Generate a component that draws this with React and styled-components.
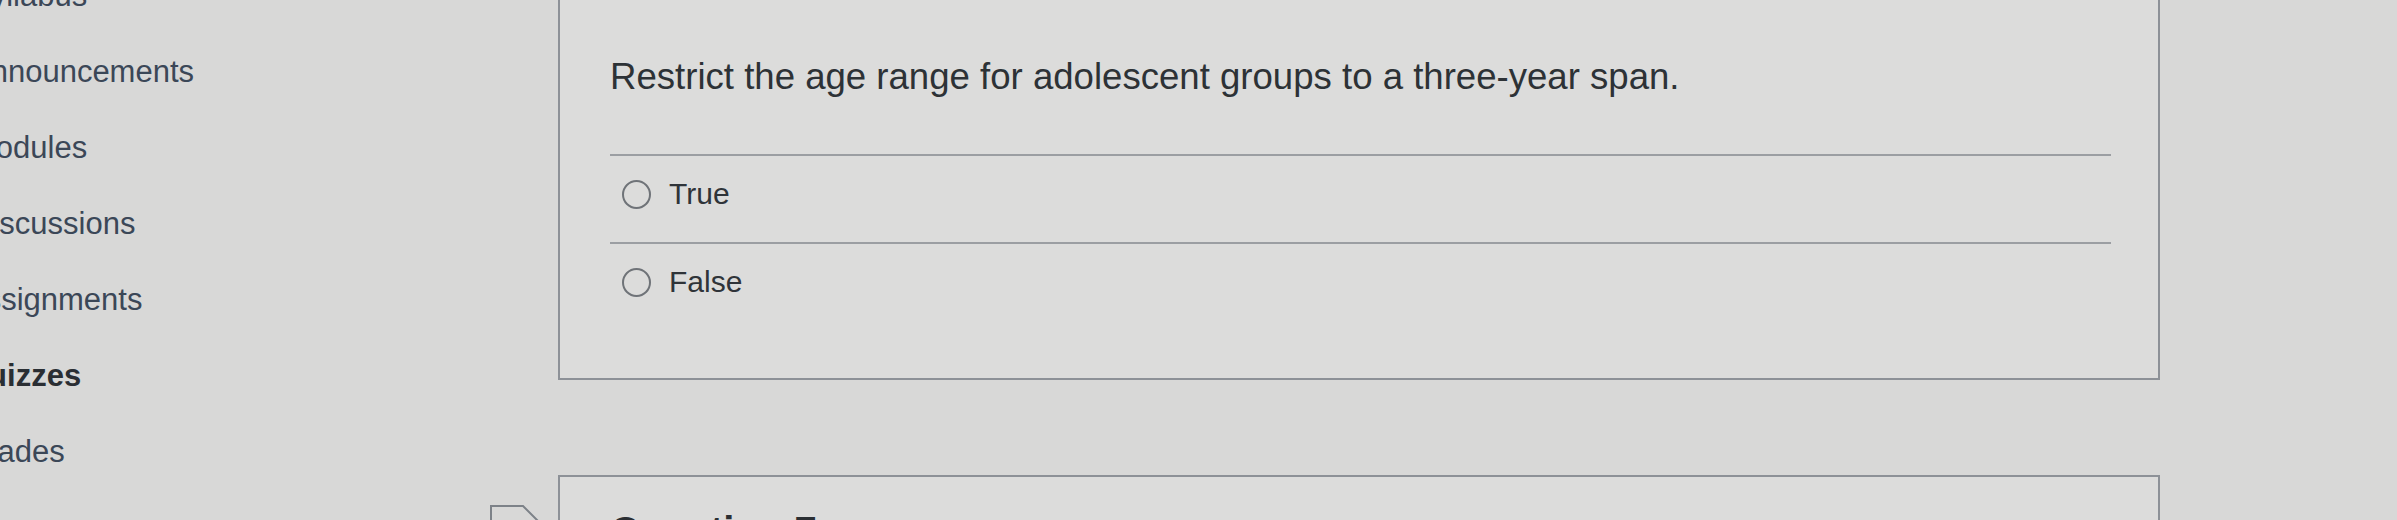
import React from "react";
import styled, { createGlobalStyle } from "styled-components";

const GlobalStyle = createGlobalStyle`
  html, body {
    margin: 0;
    padding: 0;
    background: #d8d8d7;
  }
  body {
    font-family: "Liberation Sans", Arial, sans-serif;
    overflow: hidden;
  }
`;

const Page = styled.div`
  display: flex;
  width: 2397px;
  height: 520px;
  overflow: hidden;
  background: #d8d8d7;
`;

// course nav, scrolled partly off the left edge
const Sidebar = styled.nav`
  flex: 0 0 510px;
  margin-left: -30px;
  margin-top: -42px;
  display: flex;
  flex-direction: column;
`;

const NavLink = styled.a`
  display: block;
  margin-left: ${(p) => p.$nudge || 0}px;
  font-size: 31px;
  line-height: 76px;
  white-space: nowrap;
  text-decoration: none;
  color: ${(p) => (p.$active ? "#2a2e33" : "#3b4757")};
  font-weight: ${(p) => (p.$active ? "bold" : "normal")};
`;

const Main = styled.main`
  flex: 0 0 1680px;
  display: flex;
  flex-direction: column;
  margin-top: -2px;
`;

const QuestionRow = styled.div`
  display: flex;
  margin-top: ${(p) => p.$gap || 0}px;
`;

const Gutter = styled.div`
  flex: 0 0 78px;
  box-sizing: border-box;
  padding: 30px 0 0 10px;
`;

const Card = styled.section`
  flex: 0 0 1602px;
  box-sizing: border-box;
  border: 2px solid #8d9197;
  background: #dcdcdb;
`;

const CardBody = styled.div`
  padding: 56px 47px 46px 50px;
`;

const QuestionText = styled.p`
  margin: 0 0 56px;
  font-size: 36.6px;
  line-height: 42px;
  color: #2d3236;
`;

const Answers = styled.div`
  display: flex;
  flex-direction: column;
`;

const Answer = styled.label`
  display: flex;
  align-items: center;
  gap: 18px;
  border-top: 2px solid #9b9ea2;
  padding: 20px 0 ${(p) => (p.$last ? 32 : 30)}px 12px;
  font-size: 30px;
  line-height: 36px;
  color: #2f3439;
`;

const Radio = styled.span`
  flex: 0 0 auto;
  width: 29px;
  height: 29px;
  box-sizing: border-box;
  border: 2px solid #6f7378;
  border-radius: 50%;
`;

const CardHeader = styled.header`
  padding: 31px 50px 20px;
`;

const QuestionName = styled.h2`
  margin: 0;
  font-size: 40px;
  line-height: 46px;
  font-weight: bold;
  color: #2b2f33;
`;

const FlagIcon = () => (
  <svg width="60" height="50" viewBox="0 0 60 50" fill="none">
    <path d="M1 1 H33 L56 24 L33 47 H1 Z" stroke="#7d8288" strokeWidth="2" />
  </svg>
);

const navItems = [
  { label: "Syllabus", nudge: 0 },
  { label: "Announcements", nudge: 0 },
  { label: "Modules", nudge: 0 },
  { label: "Discussions", nudge: 0 },
  { label: "Assignments", nudge: -5 },
  { label: "Quizzes", nudge: -6 },
  { label: "Grades", nudge: -7 },
];

const App = () => {
  return (
    <>
      <GlobalStyle />
      <Page>
        <Sidebar>
          {navItems.map((item) => (
            <NavLink
              key={item.label}
              $nudge={item.nudge}
              $active={item.label === "Quizzes"}
            >
              {item.label}
            </NavLink>
          ))}
        </Sidebar>
        <Main>
          <QuestionRow>
            <Gutter />
            <Card>
              <CardBody>
                <QuestionText>
                  Restrict the age range for adolescent groups to a three-year span.
                </QuestionText>
                <Answers>
                  <Answer>
                    <Radio />
                    True
                  </Answer>
                  <Answer $last>
                    <Radio />
                    False
                  </Answer>
                </Answers>
              </CardBody>
            </Card>
          </QuestionRow>
          <QuestionRow $gap={95}>
            <Gutter>
              <FlagIcon />
            </Gutter>
            <Card>
              <CardHeader>
                <QuestionName>Question 7</QuestionName>
              </CardHeader>
            </Card>
          </QuestionRow>
        </Main>
      </Page>
    </>
  );
};

export default App;
